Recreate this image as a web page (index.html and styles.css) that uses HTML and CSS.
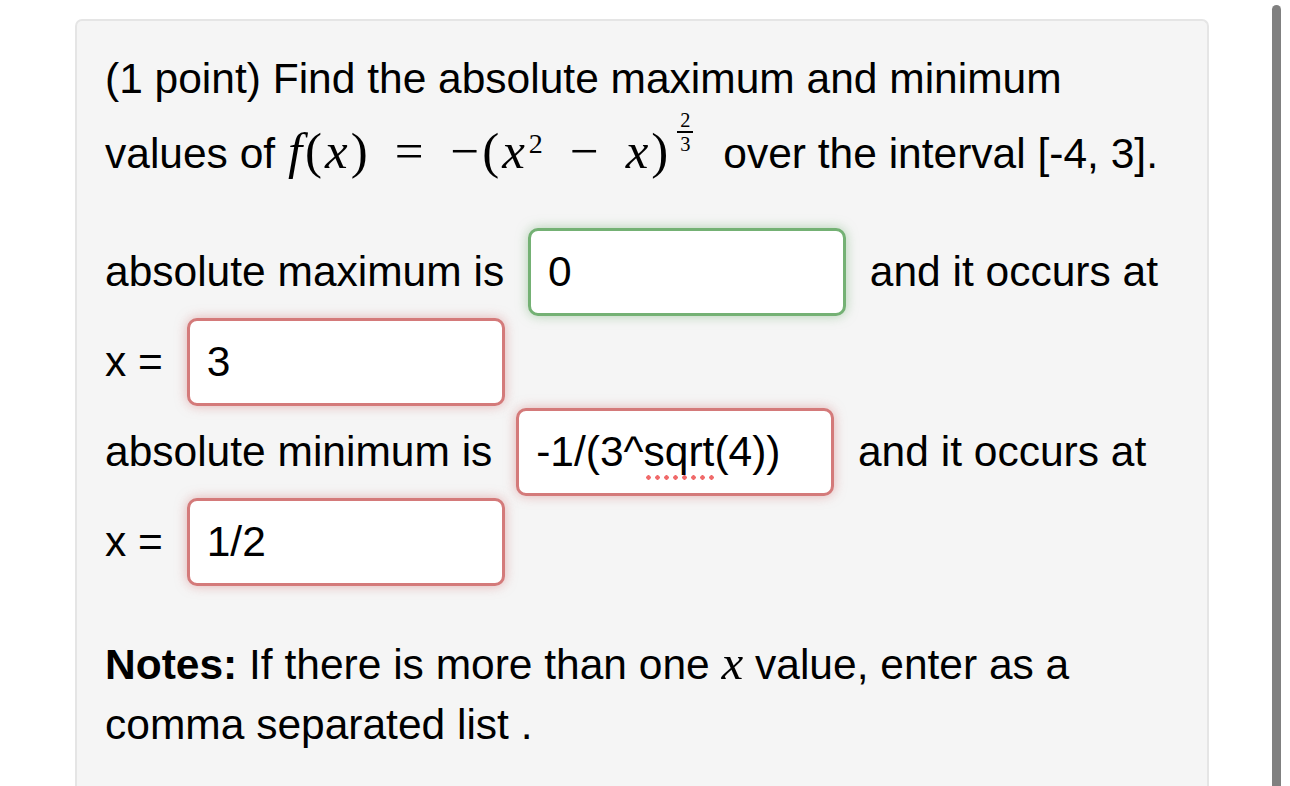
FILE: index.html
```html
<!DOCTYPE html>
<html lang="en">
<head>
  <meta charset="UTF-8" />
  <meta name="viewport" content="width=device-width, initial-scale=1.0"/>
  <title>Problem 1</title>
  <link rel="stylesheet" href="styles.css">
</head>
<body>
  <div class="page">
    <main class="problem">
      <p class="question">
        (1 point) Find the absolute maximum and minimum values of
        <span class="math"><i>f</i>(<i>x</i>)<span class="op">=</span>&minus;(<i>x</i><sup>2</sup><span class="op">&minus;</span><i>x</i>)<span class="frac"><span class="num">2</span><span class="den">3</span></span></span>
        over the interval [-4, 3].
      </p>

      <p class="answers">
        absolute maximum is <span class="ans correct">0</span> and it occurs at<br>
        x = <span class="ans wrong">3</span><br>
        absolute minimum is <span class="ans wrong">-1/(3^<span class="spell">sqrt</span>(4))</span> and it occurs at<br>
        x = <span class="ans wrong">1/2</span>
      </p>

      <p class="notes">
        <b>Notes:</b> If there is more than one <i class="var">x</i> value, enter as a comma separated list .
      </p>
    </main>
    <div class="scrollbar"></div>
  </div>
</body>
</html>
```

FILE: styles.css
```css
html, body {
  margin: 0;
  height: 100%;
  overflow: hidden;
  background: #fff;
}

body {
  font-family: "Liberation Sans", Arial, sans-serif;
  font-size: 42.5px;
  color: #000;
}

.page {
  display: flex;
  align-items: flex-start;
  padding: 19px 9px 0 75px;
  height: 100%;
  box-sizing: border-box;
}

.problem {
  width: 1134px;
  min-height: 900px;
  box-sizing: border-box;
  background: #f5f5f5;
  border: 2px solid #e5e5e5;
  border-bottom: none;
  border-radius: 7px 7px 0 0;
  padding: 28px 26px 0 28px;
  line-height: 60px;
}

.problem p {
  margin: 0 0 43px;
}

.scrollbar {
  margin-left: auto;
  margin-top: -14px;
  width: 9px;
  height: 800px;
  background: #808080;
  border-radius: 5px 5px 0 0;
}

/* math */
.math {
  display: inline-block;
  font-family: "Liberation Serif", "DejaVu Serif", serif;
  font-size: 1.2em;
  letter-spacing: 3px;
  line-height: 60px;
  padding-top: 12px;
  margin: 0 18px 0 1px;
}

.math i, .var {
  font-family: "Liberation Serif", "DejaVu Serif", serif;
}

.var {
  font-size: 1.15em;
  line-height: 0;
}

.math .op {
  margin: 0 24px;
}

.math sup {
  font-size: 0.55em;
  line-height: 0;
  vertical-align: 15px;
  margin-left: 1px;
}

.frac {
  display: inline-flex;
  flex-direction: column;
  align-items: center;
  font-size: 0.4em;
  letter-spacing: 0;
  line-height: 1;
  vertical-align: 41px;
  margin: -30px 0 0 6px;
}

.frac .num {
  border-bottom: 2px solid #000;
  padding: 0 3px 1px;
}

.frac .den {
  padding-top: 1px;
}

/* answer blanks */
.answers {
  line-height: 58px;
}

.ans {
  display: inline-block;
  width: 318px;
  height: 88px;
  box-sizing: border-box;
  margin: 1px 12px;
  padding: 18px 17px;
  line-height: 46px;
  background: #fff;
  border: 3px solid #ccc;
  border-radius: 10px;
  vertical-align: baseline;
  white-space: nowrap;
}

.ans.correct {
  border-color: #74b174;
  box-shadow: 0 0 12px rgba(116, 177, 116, 0.55);
}

.ans.wrong {
  border-color: #d47a7a;
  box-shadow: 0 0 12px rgba(212, 122, 122, 0.55);
}

.spell {
  position: relative;
}

.spell::after {
  content: "";
  position: absolute;
  left: 0;
  right: 0;
  bottom: -5px;
  height: 5px;
  background: radial-gradient(circle, #f06a6a 2px, transparent 2.5px) 0 0 / 9px 5px repeat-x;
}

.notes {
  margin-top: 48px !important;
}
```
